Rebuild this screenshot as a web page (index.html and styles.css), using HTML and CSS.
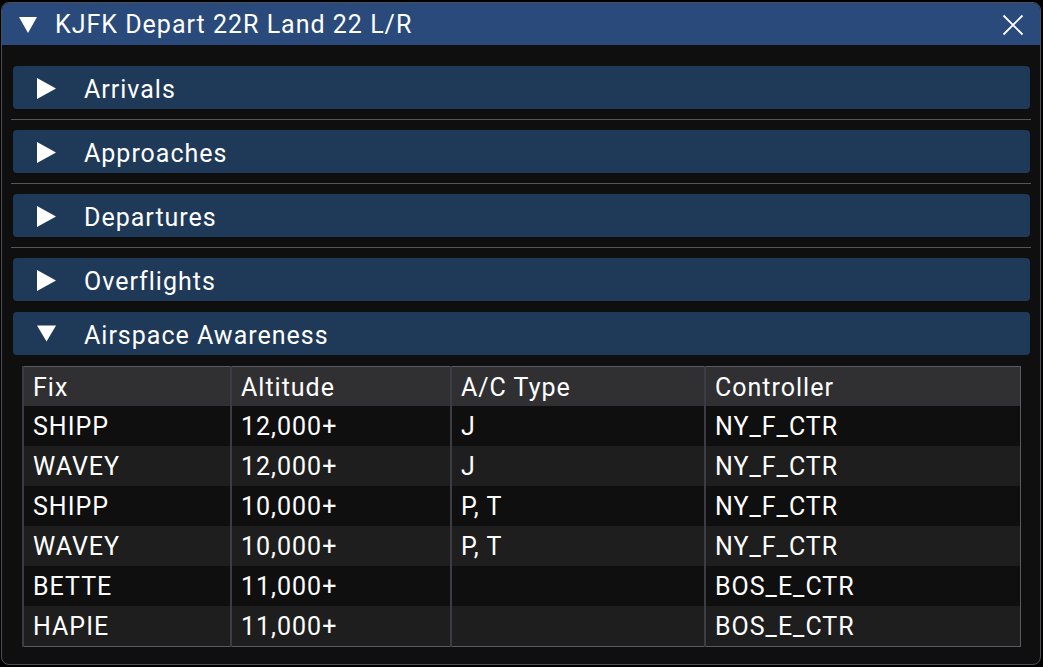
FILE: index.html
```html
<!DOCTYPE html>
<html>
<head>
<meta charset="utf-8">
<link rel="stylesheet" href="styles.css">
</head>
<body>
<div class="window">
  <div class="titlebar">
    <svg class="title-arrow" width="18" height="17" viewBox="0 0 18 17"><polygon points="0,0 18,0 9,16" fill="#fff"/></svg>
    <span class="title">KJFK Depart 22R Land 22 L/R</span>
    <svg class="close" width="22" height="22" viewBox="0 0 22 22"><path d="M1.5 1.5 L20.5 20.5 M20.5 1.5 L1.5 20.5" stroke="#fff" stroke-width="1.8" fill="none"/></svg>
  </div>
  <div class="content">
    <div class="header"><svg class="arrow" width="20" height="22" viewBox="0 0 20 22"><polygon points="0,0 19,10.5 0,21" fill="#fff"/></svg><span>Arrivals</span></div>
    <div class="sep"></div>
    <div class="header"><svg class="arrow" width="20" height="22" viewBox="0 0 20 22"><polygon points="0,0 19,10.5 0,21" fill="#fff"/></svg><span>Approaches</span></div>
    <div class="sep"></div>
    <div class="header"><svg class="arrow" width="20" height="22" viewBox="0 0 20 22"><polygon points="0,0 19,10.5 0,21" fill="#fff"/></svg><span>Departures</span></div>
    <div class="sep"></div>
    <div class="header"><svg class="arrow" width="20" height="22" viewBox="0 0 20 22"><polygon points="0,0 19,10.5 0,21" fill="#fff"/></svg><span>Overflights</span></div>
    <div class="header open"><svg class="arrow down" width="21" height="18" viewBox="0 0 21 18"><polygon points="0,0 20,0 10,17" fill="#fff"/></svg><span>Airspace Awareness</span></div>
    <table class="grid">
      <colgroup><col class="c1"><col class="c2"><col class="c3"><col class="c4"></colgroup>
      <thead>
        <tr><th>Fix</th><th>Altitude</th><th>A/C Type</th><th>Controller</th></tr>
      </thead>
      <tbody>
        <tr><td>SHIPP</td><td>12,000+</td><td>J</td><td>NY_F_CTR</td></tr>
        <tr><td>WAVEY</td><td>12,000+</td><td>J</td><td>NY_F_CTR</td></tr>
        <tr><td>SHIPP</td><td>10,000+</td><td>P, T</td><td>NY_F_CTR</td></tr>
        <tr><td>WAVEY</td><td>10,000+</td><td>P, T</td><td>NY_F_CTR</td></tr>
        <tr><td>BETTE</td><td>11,000+</td><td></td><td>BOS_E_CTR</td></tr>
        <tr><td>HAPIE</td><td>11,000+</td><td></td><td>BOS_E_CTR</td></tr>
      </tbody>
    </table>
  </div>
</div>
</body>
</html>
```
FILE: styles.css
```css
html, body {
  margin: 0;
  padding: 0;
  background: #000;
}
body {
  font-family: Roboto, "Noto Sans", sans-serif;
  color: #fff;
  font-size: 25px;
  letter-spacing: 1px;
}
.window {
  margin: 2px 0 0 1px;
  width: 1040px;
  height: 663px;
  box-sizing: border-box;
  border: 1px solid #4e4e58;
  border-radius: 8px;
  background: #0f0f0f;
  overflow: hidden;
}
.titlebar {
  height: 42px;
  background: #294a7a;
  display: flex;
  align-items: center;
  padding-left: 17px;
  padding-right: 16px;
}
.title-arrow {
  display: block;
  margin-top: 2px;
}
.title {
  margin-left: 18px;
  flex: 1;
  line-height: 42px;
  padding-top: 2px;
}
.close {
  display: block;
  margin-top: 1px;
}
.content {
  padding: 21px 10px 0 11px;
}
.header {
  height: 43px;
  background: #1f3958;
  border-radius: 4px;
  display: flex;
  align-items: center;
  padding-left: 24px;
}
.header .arrow {
  display: block;
  width: 20px;
  margin-right: 27px;
  margin-top: 2px;
}
.header .arrow.down {
  margin-top: 1px;
}
.header span {
  line-height: 43px;
  padding-top: 3px;
}
.sep {
  height: 1px;
  background: #55555e;
  margin: 10px -1px 10px -2px;
}
.header.open {
  margin-top: 11px;
}
.grid {
  margin: 11px 0 0 9px;
  width: 999px;
  border-collapse: collapse;
  table-layout: fixed;
  border: 1px solid #5a5a64;
}
.c1 { width: 208px; }
.c2 { width: 220px; }
.c3 { width: 254px; }
.c4 { width: auto; }
.grid th, .grid td {
  text-align: left;
  font-weight: normal;
  padding: 2px 0 0 9px;
  height: 38px;
  line-height: 38px;
  border-left: 2px solid #3c3c44;
  white-space: nowrap;
}
.grid th {
  background: #303033;
  height: 37px;
  line-height: 37px;
}
.grid tbody tr:nth-child(odd) td {
  background: #0f0f0f;
}
.grid tbody tr:nth-child(even) td {
  background: #1e1e1e;
}
```
